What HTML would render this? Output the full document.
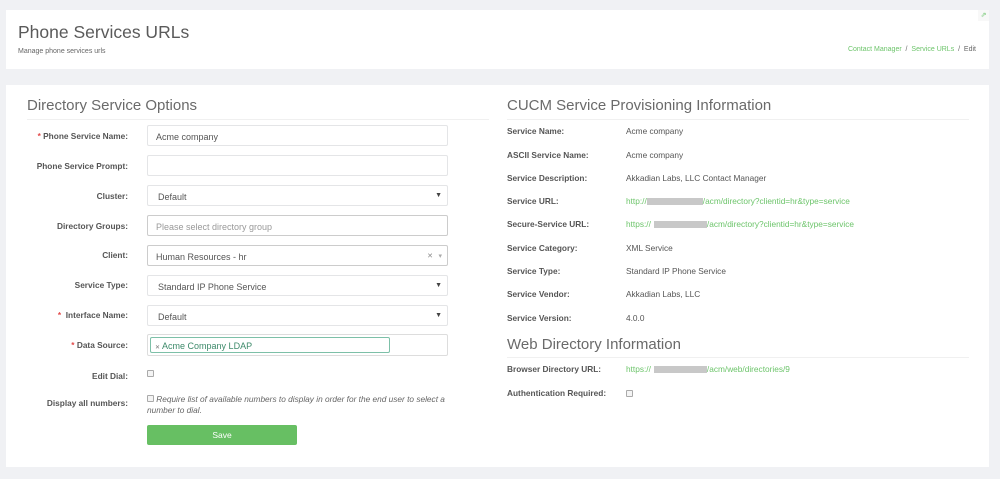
<!DOCTYPE html>
<html><head><style>
*{margin:0;padding:0;box-sizing:border-box}
body{width:1000px;height:479px;background:#f0f1f4;font-family:"Liberation Sans",sans-serif;position:relative;overflow:hidden;color:#555}
.card{position:absolute;background:#fff;left:6px;width:983px}
.a{position:absolute;white-space:nowrap}
.lbl{position:absolute;right:872px;font-size:8.3px;font-weight:bold;color:#555;text-align:right;white-space:nowrap}
.req{color:#e34b4b}
.inp{position:absolute;left:147px;width:301px;height:21px;border:1px solid #e4e5e7;border-radius:2px;font-size:9px;color:#555;padding:6px 8px;white-space:nowrap}
.arr{position:absolute;right:5px;top:6px;font-size:7px;color:#444}
.rl{position:absolute;left:507px;font-size:8.3px;font-weight:bold;color:#555;white-space:nowrap}
.rv{position:absolute;left:626px;font-size:8.3px;color:#555;white-space:nowrap}
.g{color:#6cc46a}
.blur{display:inline-block;width:56px;height:7px;background:#c8c8c8;vertical-align:-1px}
.cb{position:absolute;width:7px;height:7px;border:1px solid #aaa;border-radius:1px;background:#f4f4f4}
.h{position:absolute;white-space:nowrap;color:#6a6a6a}
</style></head><body>
<div class="card" style="top:10px;height:59px">
  <div class="h" style="left:12px;top:12px;font-size:17.5px;color:#5a5a5a">Phone Services URLs</div>
  <div class="a" style="left:12px;top:38px;font-size:7px;color:#666">Manage phone services urls</div>
  <div class="a" style="right:13px;top:36px;font-size:7px;color:#666"><span class="g">Contact Manager</span> &nbsp;/&nbsp; <span class="g">Service URLs</span> &nbsp;/&nbsp; Edit</div>
  <div class="a" style="right:0;top:0;width:11px;height:11px;background:#f8f8f8;font-size:7px;color:#6cc46a;text-align:center;line-height:11px">⇗</div>
</div>
<div class="card" style="top:85px;height:382px"></div>
<div class="h" style="left:27px;top:97px;font-size:15px">Directory Service Options</div>
<div class="a" style="left:27px;top:119px;width:462px;height:1px;background:#f0f0f0"></div>

<div class="lbl" style="top:131px"><span class="req">*</span> Phone Service Name:</div>
<div class="inp" style="top:125px">Acme company</div>
<div class="lbl" style="top:161px">Phone Service Prompt:</div>
<div class="inp" style="top:155px"></div>
<div class="lbl" style="top:191px">Cluster:</div>
<div class="inp" style="top:185px;padding-left:10px">Default<span class="arr">▼</span></div>
<div class="lbl" style="top:221px">Directory Groups:</div>
<div class="inp" style="top:215px;color:#999;border-color:#ccc">Please select directory group</div>
<div class="lbl" style="top:250px">Client:</div>
<div class="inp" style="top:245px;border-color:#ccc">Human Resources - hr<span class="arr" style="right:14px;color:#888">✕</span><span class="arr" style="color:#aaa">▾</span></div>
<div class="lbl" style="top:280px">Service Type:</div>
<div class="inp" style="top:275px;padding-left:10px">Standard IP Phone Service<span class="arr">▼</span></div>
<div class="lbl" style="top:310px"><span class="req">*</span>&nbsp; Interface Name:</div>
<div class="inp" style="top:305px;padding-left:10px">Default<span class="arr">▼</span></div>
<div class="lbl" style="top:340px"><span class="req">*</span> Data Source:</div>
<div class="inp" style="top:334px;height:22px;border-color:#ddd;padding:2px"><div style="width:240px;height:16px;border:1px solid #7dc0a8;border-radius:2px;padding:3px 4px;color:#3d8a6a;font-size:9px"><span style="font-size:6px;color:#777">✕</span> Acme Company LDAP</div></div>
<div class="lbl" style="top:371px">Edit Dial:</div>
<div class="cb" style="left:147px;top:370px"></div>
<div class="lbl" style="top:398px">Display all numbers:</div>
<div class="cb" style="left:147px;top:395px"></div>
<div class="a" style="left:147px;top:394px;font-size:8.3px;font-style:italic;color:#666;line-height:11px;white-space:normal;width:305px">&nbsp;&nbsp;&nbsp; Require list of available numbers to display in order for the end user to select a number to dial.</div>
<div class="a" style="left:147px;top:425px;width:150px;height:20px;background:#67bf63;border-radius:2px;color:#fff;font-size:8.5px;text-align:center;line-height:20px">Save</div>

<div class="h" style="left:507px;top:97px;font-size:15px">CUCM Service Provisioning Information</div>
<div class="a" style="left:507px;top:119px;width:462px;height:1px;background:#f0f0f0"></div>
<div class="rl" style="top:126px">Service Name:</div><div class="rv" style="top:126px">Acme company</div>
<div class="rl" style="top:150px">ASCII Service Name:</div><div class="rv" style="top:150px">Acme company</div>
<div class="rl" style="top:173px">Service Description:</div><div class="rv" style="top:173px">Akkadian Labs, LLC Contact Manager</div>
<div class="rl" style="top:196px">Service URL:</div><div class="rv g" style="top:196px">http://<span class="blur"></span>/acm/directory?clientid=hr&amp;type=service</div>
<div class="rl" style="top:219px">Secure-Service URL:</div><div class="rv g" style="top:219px">https://<span class="blur" style="width:53px;margin-left:3px"></span>/acm/directory?clientid=hr&amp;type=service</div>
<div class="rl" style="top:243px">Service Category:</div><div class="rv" style="top:243px">XML Service</div>
<div class="rl" style="top:266px">Service Type:</div><div class="rv" style="top:266px">Standard IP Phone Service</div>
<div class="rl" style="top:289px">Service Vendor:</div><div class="rv" style="top:289px">Akkadian Labs, LLC</div>
<div class="rl" style="top:313px">Service Version:</div><div class="rv" style="top:313px">4.0.0</div>
<div class="h" style="left:507px;top:336px;font-size:15px">Web Directory Information</div>
<div class="a" style="left:507px;top:357px;width:462px;height:1px;background:#f0f0f0"></div>
<div class="rl" style="top:364px">Browser Directory URL:</div><div class="rv g" style="top:364px">https://<span class="blur" style="width:53px;margin-left:3px"></span>/acm/web/directories/9</div>
<div class="rl" style="top:388px">Authentication Required:</div>
<div class="cb" style="left:626px;top:390px"></div>
</body></html>
